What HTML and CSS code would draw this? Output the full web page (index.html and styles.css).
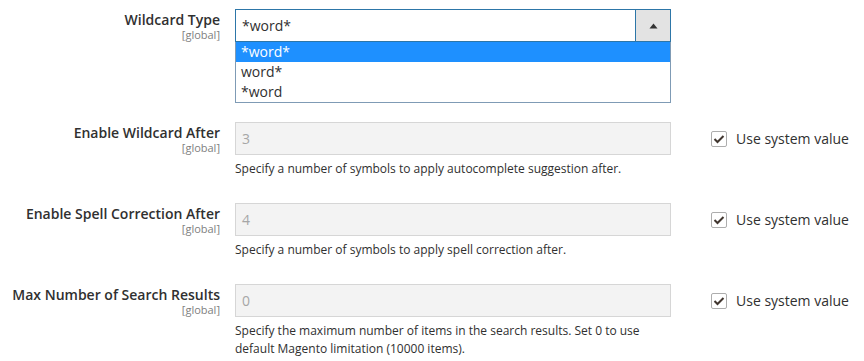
FILE: index.html
```html
<!DOCTYPE html>
<html>
<head>
<meta charset="utf-8">
<link rel="stylesheet" href="styles.css">
</head>
<body>
<div class="form">
  <div class="row row-first">
    <div class="label"><span class="title">Wildcard Type</span><span class="scope">[global]</span></div>
    <div class="control">
      <div class="select">
        <span class="select-value">*word*</span>
        <span class="select-btn"><svg width="9" height="6" viewBox="0 0 9 6"><path d="M4.5 0.5 L8.5 5.5 L0.5 5.5 Z" fill="#333"/></svg></span>
      </div>
      <ul class="options">
        <li class="opt opt-active">*word*</li>
        <li class="opt">word*</li>
        <li class="opt">*word</li>
      </ul>
    </div>
    <div class="use"></div>
  </div>

  <div class="row">
    <div class="label"><span class="title">Enable Wildcard After</span><span class="scope">[global]</span></div>
    <div class="control">
      <div class="input">3</div>
      <div class="note">Specify a number of symbols to apply autocomplete suggestion after.</div>
    </div>
    <label class="use"><span class="check"><svg width="12" height="10" viewBox="0 0 12 10"><path d="M1.5 5 L4.5 8 L10.5 2" fill="none" stroke="#41362f" stroke-width="2"/></svg></span>Use system value</label>
  </div>

  <div class="row">
    <div class="label"><span class="title">Enable Spell Correction After</span><span class="scope">[global]</span></div>
    <div class="control">
      <div class="input">4</div>
      <div class="note">Specify a number of symbols to apply spell correction after.</div>
    </div>
    <label class="use"><span class="check"><svg width="12" height="10" viewBox="0 0 12 10"><path d="M1.5 5 L4.5 8 L10.5 2" fill="none" stroke="#41362f" stroke-width="2"/></svg></span>Use system value</label>
  </div>

  <div class="row">
    <div class="label"><span class="title">Max Number of Search Results</span><span class="scope">[global]</span></div>
    <div class="control">
      <div class="input">0</div>
      <div class="note">Specify the maximum number of items in the search results. Set 0 to use default Magento limitation (10000 items).</div>
    </div>
    <label class="use"><span class="check"><svg width="12" height="10" viewBox="0 0 12 10"><path d="M1.5 5 L4.5 8 L10.5 2" fill="none" stroke="#41362f" stroke-width="2"/></svg></span>Use system value</label>
  </div>
</div>
</body>
</html>
```
FILE: styles.css
```css
html, body {
  margin: 0;
  padding: 0;
  background: #fff;
}
body {
  font-family: "Open Sans", "Noto Sans", sans-serif;
  color: #303030;
}
.form {
  padding-top: 9px;
}
.row {
  display: grid;
  grid-template-columns: 220px 451px 1fr;
  align-items: start;
  margin-bottom: 25px;
}
.row-first {
  margin-bottom: 80px;
  height: 33px;
}
.label {
  display: flex;
  flex-direction: column;
  align-items: flex-end;
  text-align: right;
  padding-top: 2px;
}
.title {
  font-size: 14px;
  font-weight: 600;
  line-height: 17px;
  color: #303030;
}
.scope {
  font-size: 11px;
  line-height: 13px;
  color: #808080;
}
.control {
  margin-left: 15px;
  position: relative;
}
.select {
  height: 33px;
  box-sizing: border-box;
  border: 1px solid #2d76a8;
  display: flex;
  align-items: stretch;
  background: #fff;
}
.select-value {
  flex: 1;
  font-size: 14px;
  line-height: 31px;
  padding-left: 6px;
  color: #303030;
}
.select-btn {
  width: 34px;
  border-left: 1px solid #2d76a8;
  background: #e3e3e3;
  display: flex;
  align-items: center;
  justify-content: center;
}
.options {
  position: absolute;
  left: 0;
  right: 0;
  top: 33px;
  margin: 0;
  padding: 0;
  list-style: none;
  border: 1px solid #7f9bb5;
  border-top: none;
  background: #fff;
}
.opt {
  font-size: 14px;
  line-height: 20px;
  height: 20px;
  padding-left: 5px;
  color: #303030;
}
.opt-active {
  background: #1e90ff;
  color: #fff;
}
.input {
  height: 33px;
  box-sizing: border-box;
  border: 1px solid #d6d6d6;
  background: #f3f3f3;
  font-size: 14px;
  line-height: 31px;
  padding-left: 6px;
  color: #a6a6a6;
}
.note {
  margin-top: 5px;
  font-size: 12px;
  line-height: 18px;
  color: #303030;
  padding-right: 10px;
}
.use {
  display: flex;
  align-items: center;
  height: 33px;
  margin-left: 40px;
  font-size: 14px;
  color: #303030;
  white-space: nowrap;
}
.check {
  width: 16px;
  height: 16px;
  box-sizing: border-box;
  border: 1px solid #adadad;
  border-radius: 2px;
  background: #fff;
  display: flex;
  align-items: center;
  justify-content: center;
  margin-right: 9px;
}
```
